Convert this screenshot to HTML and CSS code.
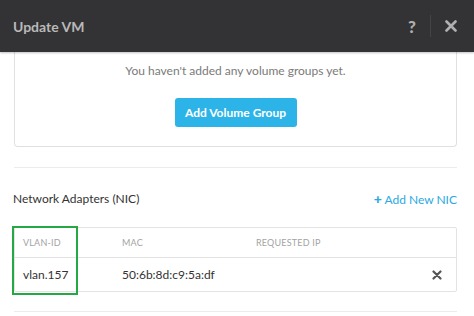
FILE: index.html
```html
<!DOCTYPE html>
<html lang="en">

<head>
    <meta charset="utf-8">
    <meta name="viewport" content="width=device-width, initial-scale=1.0">
    <title>Update VM</title>
    <link rel="stylesheet" href="styles.css">
</head>

<body>
    <!-- header med titel og knapper -->
    <div class="header">
        <span class="title">Update VM</span>
        <div class="actions">
            <span class="help">?</span>
            <span class="divider"></span>
            <svg class="close" width="12" height="12" viewBox="0 0 12 12">
                <path d="M1.5 1.5 L10.5 10.5 M10.5 1.5 L1.5 10.5" stroke="#b0b0b0" stroke-width="2.6" stroke-linecap="round" />
            </svg>
        </div>
    </div>

    <div class="content">
        <!-- volume groups -->
        <div class="card">
            <p class="empty">You haven't added any volume groups yet.</p>
            <button class="primary">Add Volume Group</button>
        </div>

        <div class="rule"></div>

        <!-- netvaerk -->
        <div class="section-head">
            <h2>Network Adapters (NIC)</h2>
            <a class="add-link"><span class="plus">+</span> Add New NIC</a>
        </div>

        <div class="nic-table">
            <div class="row head">
                <span>VLAN-ID</span>
                <span>MAC</span>
                <span>REQUESTED IP</span>
                <span></span>
            </div>
            <div class="row">
                <span>vlan.157</span>
                <span>50:6b:8d:c9:5a:df</span>
                <span></span>
                <svg class="remove" width="10" height="10" viewBox="0 0 10 10">
                    <path d="M1.5 1.5 L8.5 8.5 M8.5 1.5 L1.5 8.5" stroke="#555" stroke-width="2.2" stroke-linecap="round" />
                </svg>
            </div>
            <div class="highlight"></div>
        </div>

        <div class="rule rule-bottom"></div>
    </div>
</body>

</html>
```

FILE: styles.css
```css
body {
    margin: 0;
    padding: 0;
    font-family: Lato, "Open Sans", sans-serif;
    background-color: #ffffff;
    overflow: hidden;
}

.header {
    background-color: #333335;
    height: 52px;
    display: flex;
    align-items: center;
    justify-content: space-between;
    padding: 0 17px 0 13px;
    box-shadow: 0 1px 2px rgba(0, 0, 0, 0.25);
    position: relative;
}

.title {
    color: #b9b9b9;
    font-size: 14px;
    font-weight: bold;
}

.actions {
    display: flex;
    align-items: center;
}

.help {
    color: #b0b0b0;
    font-size: 17px;
    font-weight: 900;
    margin-right: 14px;
}

.divider {
    width: 1px;
    height: 22px;
    background-color: #444446;
    margin-right: 14px;
}

.content {
    padding: 0 17px 0 14px;
}

.card {
    border: 1px solid #e0e0e0;
    border-top: none;
    border-radius: 0 0 4px 4px;
    text-align: center;
    padding: 11px 0 19px;
}

.empty {
    margin: 0;
    font-size: 12px;
    line-height: 16px;
    color: #7a7a7a;
}

.primary {
    margin-top: 19px;
    height: 29px;
    width: 122px;
    border: none;
    border-radius: 3px;
    background-color: #2cb4e9;
    color: #ffffff;
    font-family: Lato, sans-serif;
    font-size: 12px;
    font-weight: bold;
}

.rule {
    height: 1px;
    background-color: #ececec;
    margin-top: 20px;
}

.section-head {
    display: flex;
    justify-content: space-between;
    align-items: center;
    margin-top: 21px;
    height: 18px;
}

h2 {
    margin: 0;
    font-size: 12px;
    font-weight: normal;
    color: #333333;
    margin-left: -1px;
}

.add-link {
    color: #2aa9e2;
    font-size: 12px;
}

.plus {
    font-weight: 900;
    font-size: 14px;
}

.nic-table {
    position: relative;
    margin-top: 20px;
    border: 1px solid #e3e3e3;
    border-radius: 2px;
}

.row {
    display: grid;
    grid-template-columns: 99px 134px 1fr 34px;
    align-items: center;
    height: 33px;
    font-size: 12px;
    color: #333333;
}

.row span {
    padding-left: 8px;
}

.row.head {
    height: 29px;
    border-bottom: 1px solid #e3e3e3;
    font-size: 9px;
    letter-spacing: 0.2px;
    color: #a3a3a3;
}

.remove {
    justify-self: end;
    margin-right: 14px;
}

.highlight {
    position: absolute;
    left: -3px;
    top: -2px;
    width: 62px;
    height: 65px;
    border: 2px solid #28a745;
}

.rule-bottom {
    margin-top: 19px;
}
```
